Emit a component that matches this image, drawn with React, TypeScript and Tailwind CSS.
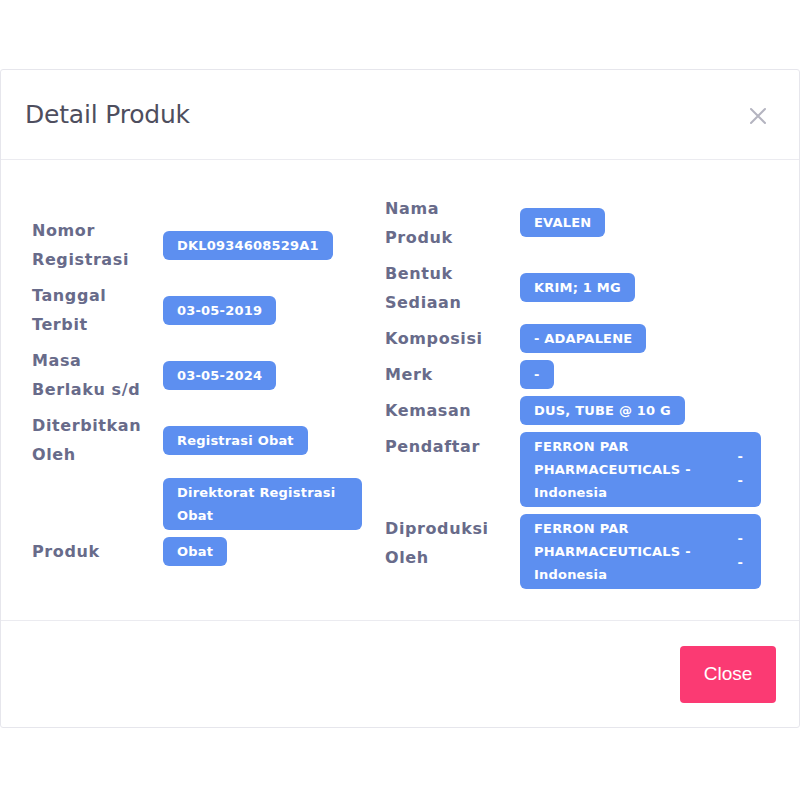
import React from "react";

const labelCls =
  "self-start text-[16px] leading-[29px] font-bold text-[#686b8a] tracking-[0.6px]";
const badgeBase =
  "bg-[#5d8ff0] text-white text-[13px] font-bold leading-[23px] py-[3px] px-[14px] rounded-[6px] tracking-[0.2px]";
const badgeCls = "inline-block " + badgeBase;

function Row({ label, children }: { label: React.ReactNode; children: React.ReactNode }) {
  return (
    <>
      <div className={labelCls}>{label}</div>
      <div className="self-center">{children}</div>
    </>
  );
}

function Company() {
  return (
    <div className={badgeBase + " w-[241px] flex items-center justify-between"}>
      <div className="w-[180px]">
        FERRON PAR
        <br />
        PHARMACEUTICALS -
        <br />
        Indonesia
      </div>
      <div className="pr-[4px] leading-[24px]">
        -
        <br />-
      </div>
    </div>
  );
}

export default function App() {
  return (
    <div
      className="bg-white h-[800px] pt-[69px]"
      style={{ fontFamily: "'DejaVu Sans', sans-serif" }}
    >
      <div className="border border-[#e6e6ec] rounded-[3px] bg-white">
        <div className="h-[90px] flex items-center justify-between pl-[24px] pr-[32px] border-b border-[#ebebf0]">
          <div className="text-[25px] text-[#4e4e5e] tracking-[-0.2px]">Detail Produk</div>
          <svg width="18" height="18" viewBox="0 0 18 18" className="mt-[2px]">
            <path d="M2 2L16 16M16 2L2 16" stroke="#b4b4c0" strokeWidth="2" strokeLinecap="round" />
          </svg>
        </div>
        <div className="h-[460px] flex items-center pl-[31px] pt-[2px]">
          <div className="w-[353px] grid grid-cols-[131px_1fr] gap-y-[7px]">
            <Row label={<>Nomor<br />Registrasi</>}>
              <span className={badgeCls}>DKL0934608529A1</span>
            </Row>
            <Row label={<>Tanggal<br />Terbit</>}>
              <span className={badgeCls}>03-05-2019</span>
            </Row>
            <Row label={<>Masa<br />Berlaku s/d</>}>
              <span className={badgeCls}>03-05-2024</span>
            </Row>
            <Row label={<>Diterbitkan<br />Oleh</>}>
              <span className={badgeCls}>Registrasi Obat</span>
            </Row>
            <Row label={""}>
              <span className={badgeCls + " w-[199px] mt-[2px]"}>Direktorat Registrasi Obat</span>
            </Row>
            <Row label="Produk">
              <span className={badgeCls}>Obat</span>
            </Row>
          </div>
          <div className="grid grid-cols-[135px_1fr] gap-y-[7px]">
            <Row label={<>Nama<br />Produk</>}>
              <span className={badgeCls}>EVALEN</span>
            </Row>
            <Row label={<>Bentuk<br />Sediaan</>}>
              <span className={badgeCls}>KRIM; 1 MG</span>
            </Row>
            <Row label="Komposisi">
              <span className={badgeCls}>- ADAPALENE</span>
            </Row>
            <Row label="Merk">
              <span className={badgeCls}>-</span>
            </Row>
            <Row label="Kemasan">
              <span className={badgeCls}>DUS, TUBE @ 10 G</span>
            </Row>
            <Row label="Pendaftar">
              <Company />
            </Row>
            <Row label={<>Diproduksi<br />Oleh</>}>
              <Company />
            </Row>
          </div>
        </div>
        <div className="h-[107px] flex items-center justify-end pr-[23px] border-t border-[#ebebf0]">
          <button
            className="w-[96px] h-[57px] rounded-[4px] bg-[#fb3a73] text-white text-[19px] mt-[1px]"
            style={{ fontFamily: "'Liberation Sans', sans-serif" }}
          >
            Close
          </button>
        </div>
      </div>
    </div>
  );
}
